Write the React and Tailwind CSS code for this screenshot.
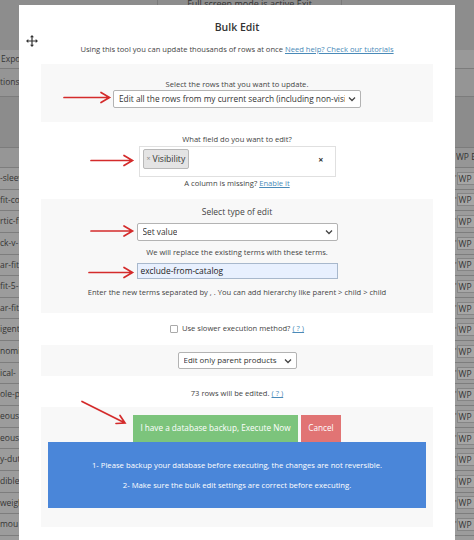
import React from "react";

const leftCells = ["-sleev", "fit-co", "rtic-fi", "ck-v-", "ar-fit", "fit-5-", "ar-fit", "igent", "nomi", "ical-", "ole-p", "eous", "eous", "y-dut", "dible", "weigh", "mou", "y-dut"];

const Chevron = () => (
  <svg width="8" height="6" viewBox="0 0 8 6" className="shrink-0">
    <polyline points="1,1.5 4,4.5 7,1.5" fill="none" stroke="#444" strokeWidth="1.3" />
  </svg>
);

const Select = ({ children, className }) => (
  <div className={`mx-auto flex items-center justify-between gap-[3px] rounded-[2px] border border-[#b3b3b3] bg-white pl-[5px] pr-[4px] text-[#333] ${className}`}>
    <span className="overflow-hidden whitespace-nowrap">{children}</span>
    <Chevron />
  </div>
);

const Help = () => <span className="text-[#4a8ab8] underline">( ? )</span>;

const MoveIcon = () => (
  <svg width="12" height="12" viewBox="0 0 12 12">
    <path d="M6 1v10M1 6h10" stroke="#333" strokeWidth="1.2" />
    <path d="M6 0 L8 2.3 H4 Z M6 12 L8 9.7 H4 Z M0 6 L2.3 4 V8 Z M12 6 L9.7 4 V8 Z" fill="#333" />
  </svg>
);

const Arrows = () => (
  <svg className="pointer-events-none absolute inset-0" width="474" height="540">
    <g stroke="#d42b2b" strokeWidth="1.7" fill="none" strokeLinecap="round">
      <path d="M64 97.5 H109 M101 92.5 L109.5 97.5 L101 102.5" />
      <path d="M91 160.5 H132 M124 155.5 L132.5 160.5 L124 165.5" />
      <path d="M91 231 H132 M124 226 L132.5 231 L124 236" />
      <path d="M89 272.5 H132 M124 267.5 L132.5 272.5 L124 277.5" />
      <path d="M82 401.5 L125 423 M116 423.5 L125 423 L120 415.5" />
    </g>
  </svg>
);

const Background = () => (
  <div className="flex h-full flex-col text-[8.5px] text-[#353535]">
    <div className="flex h-[50px] shrink-0 bg-[#8d8d8d]">
      <div className="ml-[157px] flex h-[14px] w-[185px] items-start justify-center border-x border-[#7a7a7a] text-[9px] leading-[8px] text-[#333]">
        Full screen mode is active Exit
      </div>
    </div>
    <div className="flex h-[19px] shrink-0 items-center justify-between border-b border-[#7c7c7c] bg-[#999]">
      <span className="pl-[1px]">Expor</span>
    </div>
    <div className="flex h-[28px] shrink-0 items-center justify-between border-b border-[#7c7c7c] bg-[#959595]">
      <span>tions</span>
    </div>
    <div className="h-[51px] shrink-0 border-b border-[#7c7c7c] bg-[#8c8c8c]" />
    <div className="flex h-[19px] shrink-0 items-center justify-end bg-[#969696]">
      <span className="w-[18px] overflow-hidden whitespace-nowrap">WP E</span>
    </div>
    {leftCells.map((t, i) => (
      <div key={i} className="flex h-[21.65px] shrink-0 items-center justify-between border-t border-[#7d7d7d] bg-[#9c9c9c]">
        <span className="w-[19px] overflow-hidden whitespace-nowrap">{t}</span>
        <span className="flex w-[19px] items-center overflow-hidden whitespace-nowrap">
          <span className="text-[7px]">'</span>
          <span className="border border-[#858585] bg-[#a6a6a6] px-[1px] leading-[11px]">WP I</span>
        </span>
      </div>
    ))}
  </div>
);

export default function App() {
  return (
    <div className="relative h-[540px] w-[474px] overflow-hidden bg-[#8f8f8f] font-['Open_Sans',sans-serif]">
      <Background />

      <div className="absolute bottom-0 left-[19px] top-[5px] flex w-[436px] flex-col bg-white text-[7.6px] text-[#444]">
        <div className="absolute left-[7px] top-[30px]">
          <MoveIcon />
        </div>
        <h2 className="mt-[15px] text-center text-[10.5px] font-semibold leading-[14px] text-[#333]">Bulk Edit</h2>
        <p className="mt-[9px] text-center leading-[12px]">
          Using this tool you can update thousands of rows at once{" "}
          <span className="text-[#4a8ab8] underline">Need help? Check our tutorials</span>
        </p>

        <section className="mx-[22px] mt-[9px] flex h-[58px] shrink-0 flex-col bg-[#f8f8f8] pt-[14px]">
          <p className="text-center leading-[12px]">Select the rows that you want to update.</p>
          <Select className="h-[18px] w-[248px] text-[8.3px]">Edit all the rows from my current search (including non-visible rows)</Select>
        </section>

        <section className="mx-[22px] flex h-[77px] shrink-0 flex-col pt-[11px]">
          <p className="text-center leading-[12px]">What field do you want to edit?</p>
          <div className="mx-auto mt-[1px] flex h-[31px] w-[197px] items-start justify-between border border-[#e0e0e0] px-[3px] pt-[2px]">
            <span className="flex h-[20px] items-center rounded-[2px] border border-[#b9b9b9] bg-[#e4e4e4] px-[3px] text-[8.6px] text-[#333]">
              <span className="mr-[2px] text-[7px] text-[#888]">×</span>Visibility
            </span>
            <span className="mr-[8px] mt-[4px] text-[9px] font-bold text-[#333]">×</span>
          </div>
          <p className="text-center leading-[12px]">
            A column is missing? <span className="text-[#4a8ab8] underline">Enable it</span>
          </p>
        </section>

        <section className="mx-[22px] flex h-[114px] shrink-0 flex-col bg-[#f8f8f8] pt-[7px]">
          <p className="text-center text-[8.5px] leading-[12px]">Select type of edit</p>
          <Select className="mt-[5px] h-[18px] w-[201px] text-[8.3px]">Set value</Select>
          <p className="mt-[5px] text-center leading-[12px]">We will replace the existing terms with these terms.</p>
          <div className="mx-auto mt-[5px] flex h-[16px] w-[201px] items-center border border-[#a8b8cc] bg-[#e8f0fe] px-[3px] text-[8.4px] text-[#222]">
            exclude-from-catalog
          </div>
          <p className="mt-[7px] text-center leading-[12px]">Enter the new terms separated by , . You can add hierarchy like parent &gt; child &gt; child</p>
        </section>

        <div className="mt-[9px] flex h-[14px] shrink-0 items-center justify-center gap-[4px]">
          <span className="h-[8px] w-[8px] rounded-[1px] border border-[#aaa] bg-white" />
          <span>
            Use slower execution method? <Help />
          </span>
        </div>

        <section className="mx-[22px] mt-[9px] flex h-[31px] shrink-0 flex-col bg-[#f8f8f8] pt-[7px]">
          <Select className="h-[17px] w-[119px] text-[7.9px]">Edit only parent products</Select>
        </section>

        <p className="mt-[11px] text-center leading-[12px]">
          73 rows will be edited. <Help />
        </p>

        <section className="mx-[22px] mt-[8px] flex h-[120px] shrink-0 flex-col bg-[#f8f8f8] pt-[8px]">
          <div className="flex justify-center gap-[3px]">
            <button className="h-[27px] w-[165px] bg-[#7cc47c] text-[8.2px] text-white">I have a database backup, Execute Now</button>
            <button className="h-[27px] w-[40px] bg-[#e17474] text-[8.2px] text-white">Cancel</button>
          </div>
          <div className="mx-[7px] flex h-[66px] flex-col items-center justify-center gap-[8px] bg-[#4a86d9] text-[7.7px] leading-[12px] text-white">
            <p>1- Please backup your database before executing, the changes are not reversible.</p>
            <p>2- Make sure the bulk edit settings are correct before executing.</p>
          </div>
        </section>
      </div>

      <Arrows />
    </div>
  );
}
